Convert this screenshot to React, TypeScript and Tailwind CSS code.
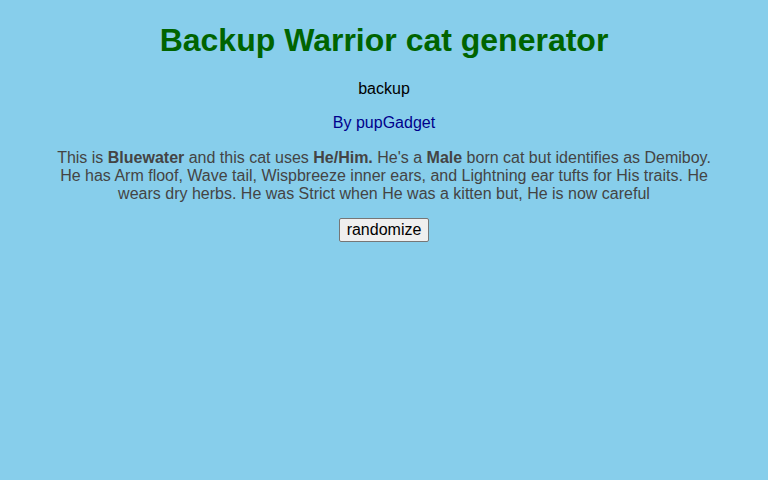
export default function App() {
  return (
    <div className="min-h-[480px] bg-[#87ceeb] text-center font-['Liberation_Sans',Arial,sans-serif] text-base leading-[normal] pt-[22px] flow-root">
      <h1 className="text-[32px] font-bold text-[#006400] leading-[normal]">Backup Warrior cat generator</h1>
      <p className="mt-[21px] text-black">backup</p>
      <p className="mt-4 text-[#00008b]">By pupGadget</p>
      <p className="mt-[17px] mx-auto max-w-[664px] text-[#444444]">
        This is <b>Bluewater</b> and this cat uses <b>He/Him.</b> He's a <b>Male</b> born cat but identifies as
        Demiboy. He has Arm floof, Wave tail, Wispbreeze inner ears, and Lightning ear tufts for His traits. He
        wears dry herbs. He was Strict when He was a kitten but, He is now careful
      </p>
      <div className="mt-[15px]">
        <button className="px-[7px] py-[2px] leading-[18px] bg-[#efefef] border border-[#767676] rounded-[2px] text-black text-base">
          randomize
        </button>
      </div>
    </div>
  );
}
